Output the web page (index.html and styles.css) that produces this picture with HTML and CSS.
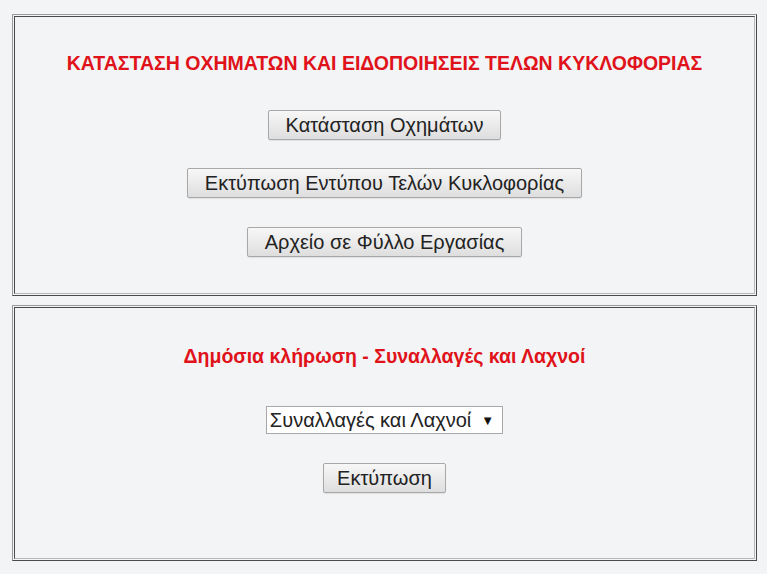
FILE: index.html
```html
<!DOCTYPE html>
<html lang="el">
<head>
<meta charset="utf-8">
<title>Κατάσταση Οχημάτων</title>
<link rel="stylesheet" href="styles.css">
</head>
<body>
<div class="page">
  <section class="panel">
    <div class="panel-inner panel-top">
      <h2 class="title">ΚΑΤΑΣΤΑΣΗ ΟΧΗΜΑΤΩΝ ΚΑΙ ΕΙΔΟΠΟΙΗΣΕΙΣ ΤΕΛΩΝ ΚΥΚΛΟΦΟΡΙΑΣ</h2>
      <button class="btn btn-first" type="button">Κατάσταση Οχημάτων</button>
      <button class="btn" type="button">Εκτύπωση Εντύπου Τελών Κυκλοφορίας</button>
      <button class="btn btn-third" type="button">Αρχείο σε Φύλλο Εργασίας</button>
    </div>
  </section>
  <section class="panel">
    <div class="panel-inner panel-bottom">
      <h2 class="title">Δημόσια κλήρωση - Συναλλαγές και Λαχνοί</h2>
      <div class="select"><span class="select-text">Συναλλαγές και Λαχνοί</span><span class="select-arrow">▼</span></div>
      <button class="btn btn-print" type="button">Εκτύπωση</button>
    </div>
  </section>
</div>
</body>
</html>
```
FILE: styles.css
```css
html, body {
  margin: 0;
  padding: 0;
  background: #f3f4f6;
}
body {
  font-family: "Liberation Sans", Arial, sans-serif;
  color: #111;
}
.page {
  display: flex;
  flex-direction: column;
  gap: 9px;
  padding: 14px 10px 0 12px;
}
.panel {
  border: 1px solid;
  border-color: #9a9a9a #4a4a4a #4a4a4a #9a9a9a;
  padding: 1px;
}
.panel-inner {
  border: 1px solid;
  border-color: #4a4a4a #b8b8b8 #b8b8b8 #4a4a4a;
  display: flex;
  flex-direction: column;
  align-items: center;
  box-sizing: border-box;
}
.panel-top {
  height: 278px;
  padding-top: 35px;
}
.panel-bottom {
  height: 252px;
  padding-top: 37px;
}
.title {
  margin: 0;
  font-size: 19.5px;
  line-height: 22px;
  font-weight: bold;
  color: #e0121a;
}
.btn {
  font-family: "Liberation Sans", Arial, sans-serif;
  font-size: 20px;
  color: #222;
  height: 30px;
  padding: 0 17px;
  margin-top: 28px;
  border: 1px solid #a8a8a8;
  border-radius: 2px;
  background: linear-gradient(#f7f7f7, #dedede);
  box-shadow: 0 1px 1px rgba(0,0,0,0.08);
}
.btn-first {
  margin-top: 36px;
}
.btn-third {
  margin-top: 29px;
}
.select {
  margin-top: 39px;
  height: 28px;
  box-sizing: border-box;
  display: flex;
  align-items: center;
  gap: 10px;
  padding: 0 8px 0 3px;
  border: 1px solid #a8a8a8;
  background: #fff;
  font-size: 20px;
  color: #222;
}
.select-arrow {
  font-size: 13px;
  color: #111;
}
.btn-print {
  margin-top: 29px;
  padding: 0 13px;
}
```
